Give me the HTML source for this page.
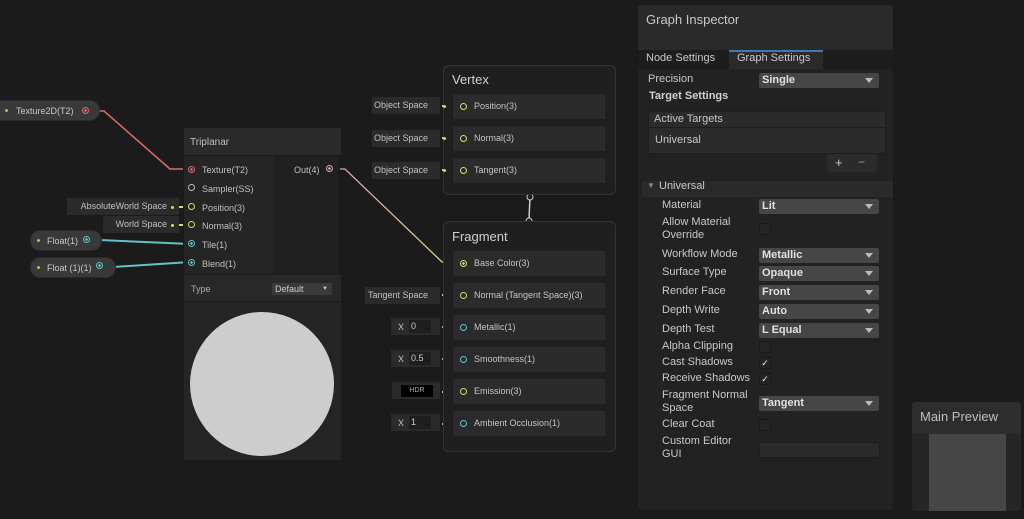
<!DOCTYPE html>
<html><head><meta charset="utf-8"><style>
*{margin:0;padding:0;box-sizing:border-box}
body{width:1024px;height:519px;background:#1b1b1b;font-family:"Liberation Sans",sans-serif;position:relative;overflow:hidden;color:#c4c4c4}
.a{position:absolute}
.pill{position:absolute;background:#393939;border-radius:10px;height:21px;font-size:9px;color:#c8c8c8;line-height:21px;border:1px solid #2a2a2a;white-space:nowrap}
.dot{position:absolute;width:3px;height:3px;border-radius:50%;background:#8fd14f}
.port{position:absolute;width:7px;height:7px;border-radius:50%;border:1.3px solid #888}
.lbl{position:absolute;font-size:9px;color:#c0c0c0;white-space:nowrap}
.fld{position:absolute;background:#2b2b2b;font-size:9px;color:#c0c0c0;height:17px;line-height:17px;text-align:right;padding-right:12px;white-space:nowrap;overflow:visible}
.slot{position:absolute;left:453px;width:152px;height:25px;background:#2b2b2b;font-size:9px;color:#c4c4c4;line-height:25px;padding-left:21px;white-space:nowrap}
.ins{font-size:11px;color:#c8c8c8;position:absolute;white-space:nowrap}
.dd{position:absolute;left:759px;width:120px;height:15px;background:#464646;border-radius:2px;font-size:11px;color:#e0e0e0;font-weight:bold;line-height:15px;padding-left:3px;white-space:nowrap}
.dd:after{content:"";position:absolute;right:6px;top:5px;border-left:4px solid transparent;border-right:4px solid transparent;border-top:5px solid #bbb}
.cb{position:absolute;left:759px;width:12px;height:12px;background:#252525;border:1px solid #1a1a1a;border-radius:2px;font-size:9px;color:#eee;line-height:11px;text-align:center}
</style></head><body>
<svg class="a" style="left:0;top:0" width="1024" height="519">
<defs><linearGradient id="g" x1="0" y1="0" x2="1" y2="1"><stop offset="0" stop-color="#d9a2c8"/><stop offset="1" stop-color="#d8d86e"/></linearGradient></defs>
<path d="M92 111 H104 L170 169 H188" stroke="#e06a6a" stroke-width="1.5" fill="none"/>
<path d="M334 169 H345 L442 262 H460" stroke="url(#g)" stroke-width="1.3" fill="none"/>
<path d="M100 240 L190 244" stroke="#5fc4c8" stroke-width="2" fill="none"/>
<path d="M113 267 L190 262" stroke="#5fc4c8" stroke-width="2" fill="none"/>
<path d="M170 207 H190 M170 225 H190" stroke="#d8d86e" stroke-width="2"/>
<path d="M530 197 L529 219" stroke="#ccc" stroke-width="1.5"/>
<circle cx="530" cy="197" r="3" fill="#1b1b1b" stroke="#ccc"/><circle cx="529" cy="221" r="3" fill="#1b1b1b" stroke="#ccc"/>
<g stroke="#d8d86e" stroke-width="2"><path d="M442 106H458M442 138H458M442 170H458M442 295H458M442 392H458"/></g>
<g stroke="#5fc4c8" stroke-width="2"><path d="M442 327H458M442 359H458M442 424H458"/></g>
</svg>

<div class="pill" style="left:-10px;top:100px;width:110px;padding-left:25px">Texture2D(T2)</div>
<div class="dot" style="left:5px;top:109px"></div>
<div class="port" style="left:82px;top:107px;border-color:#e06a6a;background:radial-gradient(#e06a6a 35%,transparent 40%)"></div>
<div class="pill" style="left:30px;top:230px;width:72px;padding-left:16px">Float(1)</div>
<div class="dot" style="left:37px;top:239px"></div>
<div class="port" style="left:83px;top:236px;border-color:#5fc4c8;background:radial-gradient(#5fc4c8 35%,transparent 40%)"></div>
<div class="pill" style="left:30px;top:257px;width:86px;padding-left:16px">Float (1)(1)</div>
<div class="dot" style="left:37px;top:266px"></div>
<div class="port" style="left:96px;top:262px;border-color:#5fc4c8;background:radial-gradient(#5fc4c8 35%,transparent 40%)"></div>
<div class="fld" style="left:67px;top:198px;width:112px">AbsoluteWorld Space</div>
<div class="fld" style="left:103px;top:216px;width:76px">World Space</div>
<div class="dot" style="left:171px;top:206px;background:#d8d86e"></div>
<div class="dot" style="left:171px;top:224px;background:#d8d86e"></div>

<div class="a" style="left:183px;top:127px;width:157px;height:333px;background:#202020;border:1px solid #181818">
 <div class="a" style="left:0;top:0;width:157px;height:28px;background:#2a2a2a;border-bottom:1px solid #1c1c1c"></div>
 <div class="lbl" style="left:6px;top:9px;font-size:10px">Triplanar</div>
 <div class="a" style="left:0;top:28px;width:90px;height:118px;background:#252525"></div>
 <div class="a" style="left:0;top:146px;width:157px;height:28px;background:#282828;border-top:1px solid #1c1c1c;border-bottom:1px solid #1c1c1c"></div>
 <div class="lbl" style="left:7px;top:156px;color:#aaa">Type</div>
 <div class="a" style="left:88px;top:155px;width:60px;height:12px;background:#3a3a3a;font-size:9px;line-height:12px;padding-left:3px;color:#ccc">Default<span style="float:right;margin-right:4px;font-size:6px">▼</span></div>
 <div class="a" style="left:0;top:174px;width:157px;height:158px;background:#252525"></div>
 <div class="a" style="left:6px;top:184px;width:144px;height:144px;border-radius:50%;background:#cdcdcd"></div>
</div>
<div class="port" style="left:188px;top:166px;border-color:#e06a6a;background:radial-gradient(#e06a6a 35%,transparent 40%)"></div>
<div class="port" style="left:188px;top:184px;border-color:#bbb"></div>
<div class="port" style="left:188px;top:203px;border-color:#d8d86e"></div>
<div class="port" style="left:188px;top:221px;border-color:#d8d86e"></div>
<div class="port" style="left:188px;top:240px;border-color:#5fc4c8;background:radial-gradient(#5fc4c8 35%,transparent 40%)"></div>
<div class="port" style="left:188px;top:259px;border-color:#5fc4c8;background:radial-gradient(#5fc4c8 35%,transparent 40%)"></div>
<div class="lbl" style="left:202px;top:165px">Texture(T2)</div>
<div class="lbl" style="left:202px;top:184px">Sampler(SS)</div>
<div class="lbl" style="left:202px;top:203px">Position(3)</div>
<div class="lbl" style="left:202px;top:221px">Normal(3)</div>
<div class="lbl" style="left:202px;top:240px">Tile(1)</div>
<div class="lbl" style="left:202px;top:259px">Blend(1)</div>
<div class="lbl" style="left:294px;top:165px">Out(4)</div>
<div class="port" style="left:326px;top:165px;border-color:#d9a2c8;background:radial-gradient(#d9a2c8 35%,transparent 40%)"></div>

<div class="a" style="left:443px;top:65px;width:173px;height:130px;background:#1f1f1f;border:1px solid #333;border-radius:6px"></div>
<div class="a" style="left:452px;top:72px;font-size:13px;color:#d0d0d0">Vertex</div>
<div class="a" style="left:443px;top:221px;width:173px;height:231px;background:#1f1f1f;border:1px solid #333;border-radius:6px"></div>
<div class="a" style="left:452px;top:229px;font-size:13px;color:#d0d0d0">Fragment</div>
<div class="slot" style="top:94px">Position(3)</div>
<div class="slot" style="top:126px">Normal(3)</div>
<div class="slot" style="top:158px">Tangent(3)</div>
<div class="slot" style="top:251px">Base Color(3)</div>
<div class="slot" style="top:283px">Normal (Tangent Space)(3)</div>
<div class="slot" style="top:315px">Metallic(1)</div>
<div class="slot" style="top:347px">Smoothness(1)</div>
<div class="slot" style="top:379px">Emission(3)</div>
<div class="slot" style="top:411px">Ambient Occlusion(1)</div>
<div class="port" style="left:460px;top:103px;border-color:#d8d86e"></div>
<div class="port" style="left:460px;top:135px;border-color:#d8d86e"></div>
<div class="port" style="left:460px;top:167px;border-color:#d8d86e"></div>
<div class="port" style="left:460px;top:260px;border-color:#d8d86e;background:radial-gradient(#d8d86e 35%,transparent 40%)"></div>
<div class="port" style="left:460px;top:292px;border-color:#d8d86e"></div>
<div class="port" style="left:460px;top:324px;border-color:#5fc4c8"></div>
<div class="port" style="left:460px;top:356px;border-color:#5fc4c8"></div>
<div class="port" style="left:460px;top:388px;border-color:#d8d86e"></div>
<div class="port" style="left:460px;top:420px;border-color:#5fc4c8"></div>
<div class="fld" style="left:372px;top:97px;width:68px">Object Space</div>
<div class="fld" style="left:372px;top:130px;width:68px">Object Space</div>
<div class="fld" style="left:372px;top:162px;width:68px">Object Space</div>
<div class="fld" style="left:365px;top:287px;width:75px">Tangent Space</div>
<div class="fld" style="left:391px;top:318px;width:49px"></div>
<div class="fld" style="left:391px;top:350px;width:49px"></div>
<div class="fld" style="left:392px;top:382px;width:48px"></div>
<div class="fld" style="left:391px;top:414px;width:49px"></div>
<div class="lbl" style="left:398px;top:322px">X</div><div class="a" style="left:409px;top:320px;width:22px;height:13px;background:#1e1e1e;font-size:9px;color:#ccc;padding-left:2px;line-height:13px">0</div>
<div class="lbl" style="left:398px;top:354px">X</div><div class="a" style="left:409px;top:352px;width:22px;height:13px;background:#1e1e1e;font-size:9px;color:#ccc;padding-left:2px;line-height:13px">0.5</div>
<div class="a" style="left:401px;top:385px;width:32px;height:12px;background:#000;font-size:7px;color:#aaa;text-align:center;line-height:12px">HDR</div>
<div class="lbl" style="left:398px;top:418px">X</div><div class="a" style="left:409px;top:416px;width:22px;height:13px;background:#1e1e1e;font-size:9px;color:#ccc;padding-left:2px;line-height:13px">1</div>
<div class="dot" style="left:443px;top:105px;background:#d8d86e"></div>
<div class="dot" style="left:443px;top:137px;background:#d8d86e"></div>
<div class="dot" style="left:443px;top:169px;background:#d8d86e"></div>

<div class="a" style="left:637px;top:4px;width:257px;height:507px;background:#222;border:1px solid #191919;border-radius:4px;overflow:hidden">
 <div class="a" style="left:0;top:0;width:257px;height:45px;background:#2a2a2a"></div>
 <div class="a" style="left:0;top:45px;width:257px;height:19px;background:#1d1d1d"></div>
 <div class="a" style="left:91px;top:45px;width:94px;height:19px;background:#2a2a2a;border-top:2px solid #3a79bb"></div>
 <div class="a" style="left:4px;top:176px;width:253px;height:16px;background:#2a2a2a"></div>
</div>
<div class="ins" style="left:646px;top:12px;font-size:13px;color:#c8c8c8">Graph Inspector</div>
<div class="ins" style="left:646px;top:52px">Node Settings</div>
<div class="ins" style="left:737px;top:52px">Graph Settings</div>
<div class="ins" style="left:648px;top:73px">Precision</div>
<div class="dd" style="left:759px;top:73px">Single</div>
<div class="ins" style="left:649px;top:90px;font-weight:bold;color:#d0d0d0">Target Settings</div>
<div class="a" style="left:648px;top:111px;width:238px;height:43px;background:#2b2b2b;border:1px solid #1e1e1e;border-radius:2px"></div>
<div class="a" style="left:648px;top:127px;width:238px;height:1px;background:#1e1e1e"></div>
<div class="ins" style="left:654px;top:113px">Active Targets</div>
<div class="ins" style="left:655px;top:134px">Universal</div>
<div class="a" style="left:827px;top:154px;width:50px;height:18px;background:#2b2b2b;border-radius:0 0 3px 3px"></div>
<div class="ins" style="left:835px;top:155px;font-size:13px">+</div><div class="ins" style="left:858px;top:155px;font-size:12px;color:#999">−</div>
<div class="ins" style="left:647px;top:181px;font-size:8px;color:#888">▼</div>
<div class="ins" style="left:659px;top:180px">Universal</div>
<div class="ins" style="left:662px;top:199px">Material</div><div class="dd" style="top:199px">Lit</div>
<div class="ins" style="left:662px;top:216px;line-height:13px">Allow Material<br>Override</div><div class="cb" style="top:223px"></div>
<div class="ins" style="left:662px;top:248px">Workflow Mode</div><div class="dd" style="top:248px">Metallic</div>
<div class="ins" style="left:662px;top:266px">Surface Type</div><div class="dd" style="top:266px">Opaque</div>
<div class="ins" style="left:662px;top:285px">Render Face</div><div class="dd" style="top:285px">Front</div>
<div class="ins" style="left:662px;top:304px">Depth Write</div><div class="dd" style="top:304px">Auto</div>
<div class="ins" style="left:662px;top:323px">Depth Test</div><div class="dd" style="top:323px">L Equal</div>
<div class="ins" style="left:662px;top:340px">Alpha Clipping</div><div class="cb" style="top:341px"></div>
<div class="ins" style="left:662px;top:356px">Cast Shadows</div><div class="cb" style="top:357px">✓</div>
<div class="ins" style="left:662px;top:372px">Receive Shadows</div><div class="cb" style="top:373px">✓</div>
<div class="ins" style="left:662px;top:389px;line-height:13px">Fragment Normal<br>Space</div><div class="dd" style="top:396px">Tangent</div>
<div class="ins" style="left:662px;top:418px">Clear Coat</div><div class="cb" style="top:419px"></div>
<div class="ins" style="left:662px;top:435px;line-height:13px">Custom Editor<br>GUI</div>
<div class="a" style="left:759px;top:442px;width:121px;height:16px;background:#2a2a2a;border:1px solid #1e1e1e;border-radius:3px"></div>

<div class="a" style="left:911px;top:401px;width:111px;height:111px;background:#262626;border:1px solid #1a1a1a;border-radius:4px;overflow:hidden">
 <div class="a" style="left:0;top:0;width:111px;height:32px;background:#2d2d2d"></div>
 <div class="a" style="left:17px;top:32px;width:77px;height:78px;background:#464646"></div>
</div>
<div class="ins" style="left:920px;top:409px;font-size:13px;color:#c0c0c0">Main Preview</div>
</body></html>
